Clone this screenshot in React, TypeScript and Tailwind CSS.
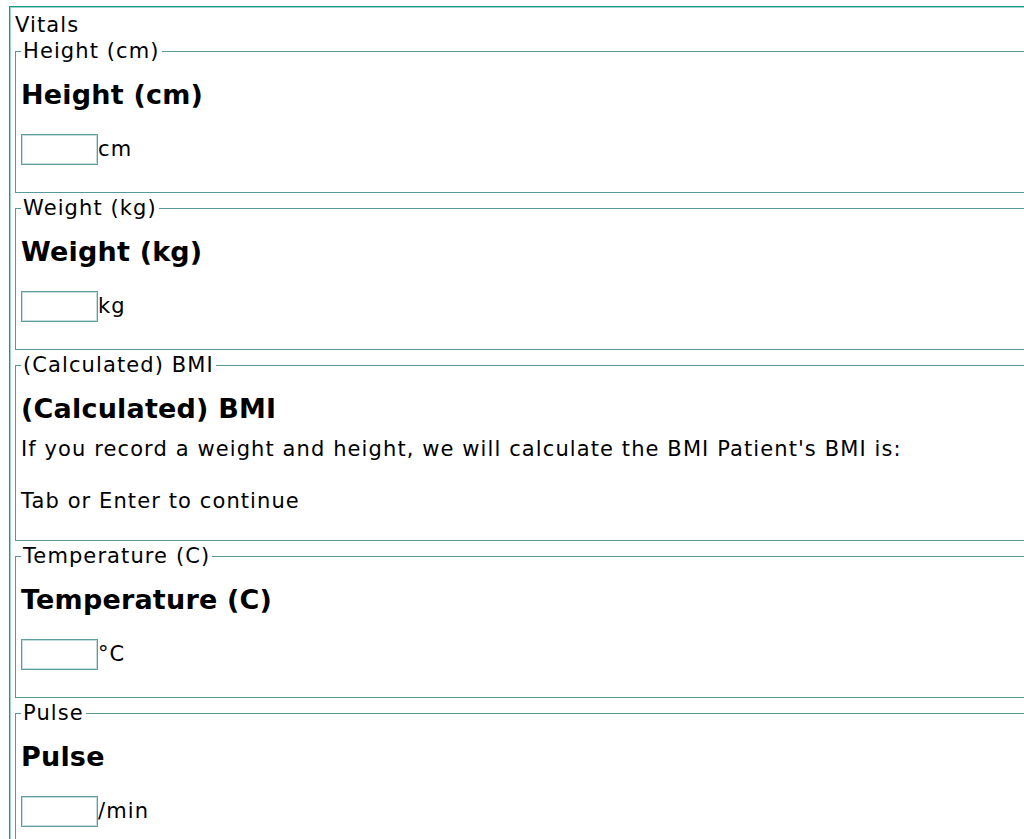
import type { ReactNode } from "react";

type Vital = { label: string; unit: string };

const before: Vital[] = [
  { label: "Height (cm)", unit: "cm" },
  { label: "Weight (kg)", unit: "kg" },
];

const after: Vital[] = [
  { label: "Temperature (C)", unit: "°C" },
  { label: "Pulse", unit: "/min" },
];

function Section({ label, children }: { label: string; children: ReactNode }) {
  return (
    <fieldset className="mt-[4px] border border-[#56999b] pb-[27px] pl-[5px] first-of-type:mt-[3px]">
      <legend className="px-[2px] leading-[23px]">{label}</legend>
      <h3 className="mt-[17px] text-[27px] font-bold leading-[30px] tracking-[0.2px]">{label}</h3>
      {children}
    </fieldset>
  );
}

function UnitInput({ unit }: { unit: string }) {
  return (
    <div className="mt-[24px] flex items-center">
      <input
        type="text"
        className="h-[31px] w-[77px] border border-[#5f9ea0] bg-white shadow-[inset_0_0_0_1px_#c4dcdc] outline-none"
      />
      <span className="leading-[23px]">{unit}</span>
    </div>
  );
}

export default function App() {
  return (
    <div className="h-[839px] overflow-hidden bg-white font-['DejaVu_Sans',Verdana,sans-serif] text-[21px] tracking-[1.1px] text-black">
      <div className="ml-[9px] mt-[6px] w-[1120px] border border-[#18998a] pl-[5px] pt-[7px] shadow-[inset_1px_1px_0_#9fd3ca]">
        <div className="leading-[23px]">Vitals</div>

        {before.map((v) => (
          <Section key={v.label} label={v.label}>
            <UnitInput unit={v.unit} />
          </Section>
        ))}

        <Section label="(Calculated) BMI">
          <p className="mt-[14px] leading-[23px]">
            If you record a weight and height, we will calculate the BMI Patient's BMI is:
          </p>
          <p className="mt-[29px] leading-[23px]">Tab or Enter to continue</p>
        </Section>

        {after.map((v) => (
          <Section key={v.label} label={v.label}>
            <UnitInput unit={v.unit} />
          </Section>
        ))}
      </div>
    </div>
  );
}
